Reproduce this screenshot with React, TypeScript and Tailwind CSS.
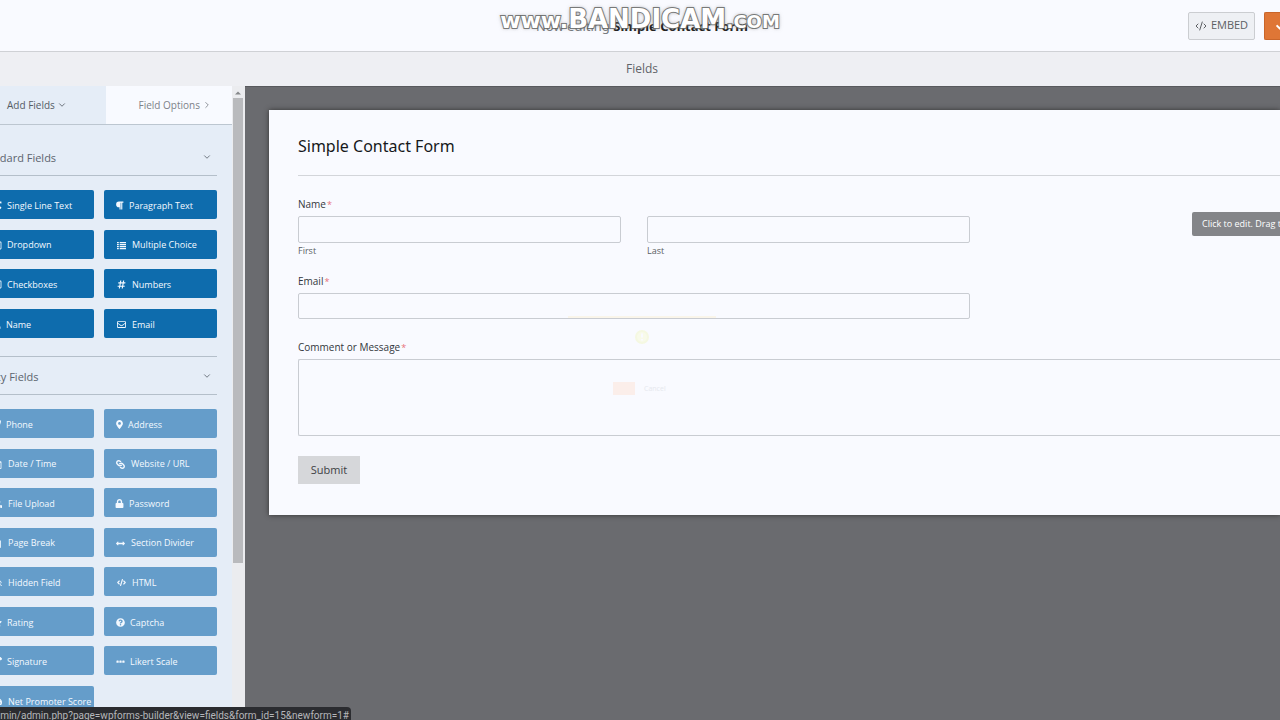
import type { ComponentType } from 'react'
import {
  FaArrowsAltH,
  FaCheck,
  FaHashtag,
  FaLink,
  FaLock,
  FaMapMarkerAlt,
  FaParagraph,
  FaPencilAlt,
  FaPhone,
  FaQuestionCircle,
  FaRegCalendar,
  FaRegCaretSquareDown,
  FaRegCheckSquare,
  FaRegEnvelope,
  FaRegEyeSlash,
  FaRegFile,
  FaStar,
  FaTachometerAlt,
  FaTextWidth,
  FaUpload,
  FaUser,
} from 'react-icons/fa'
import { ChevronDown, ChevronRight, CodeXml } from 'lucide-react'

type IconProps = { className?: string }

type Field = {
  label: string
  icon: ComponentType<IconProps>
  width: string
}

function ListIcon({ className }: IconProps) {
  return (
    <svg viewBox="0 0 20 20" fill="currentColor" className={className}>
      <path d="M0 2h4v3H0zM6 2h14v3H6zM0 6.5h4v3H0zM6 6.5h14v3H6zM0 11h4v3H0zM6 11h14v3H6zM0 15.5h4v3H0zM6 15.5h14v3H6z" />
    </svg>
  )
}

function DotsIcon({ className }: IconProps) {
  return (
    <svg viewBox="0 0 20 20" fill="currentColor" className={className}>
      <rect x="1" y="8" width="5" height="5" rx="1" />
      <rect x="7.5" y="8" width="5" height="5" rx="1" />
      <rect x="14" y="8" width="5" height="5" rx="1" />
    </svg>
  )
}

function ChainIcon({ className }: IconProps) {
  return <FaLink className={`rotate-90 ${className}`} />
}

function TagIcon({ className }: IconProps) {
  return <CodeXml className={className} strokeWidth={3} />
}

const STANDARD_FIELDS: Field[] = [
  { label: 'Single Line Text', icon: FaTextWidth, width: 'w-[8px]' },
  { label: 'Paragraph Text', icon: FaParagraph, width: 'w-[7px]' },
  { label: 'Dropdown', icon: FaRegCaretSquareDown, width: 'w-[8px]' },
  { label: 'Multiple Choice', icon: ListIcon, width: 'w-[10px]' },
  { label: 'Checkboxes', icon: FaRegCheckSquare, width: 'w-[8px]' },
  { label: 'Numbers', icon: FaHashtag, width: 'w-[10px]' },
  { label: 'Name', icon: FaUser, width: 'w-[7px]' },
  { label: 'Email', icon: FaRegEnvelope, width: 'w-[10px]' },
]

const FANCY_FIELDS: Field[] = [
  { label: 'Phone', icon: FaPhone, width: 'w-[7px]' },
  { label: 'Address', icon: FaMapMarkerAlt, width: 'w-[6px]' },
  { label: 'Date / Time', icon: FaRegCalendar, width: 'w-[9px]' },
  { label: 'Website / URL', icon: ChainIcon, width: 'w-[9px]' },
  { label: 'File Upload', icon: FaUpload, width: 'w-[9px]' },
  { label: 'Password', icon: FaLock, width: 'w-[7px]' },
  { label: 'Page Break', icon: FaRegFile, width: 'w-[9px]' },
  { label: 'Section Divider', icon: FaArrowsAltH, width: 'w-[9px]' },
  { label: 'Hidden Field', icon: FaRegEyeSlash, width: 'w-[9px]' },
  { label: 'HTML', icon: TagIcon, width: 'w-[10px]' },
  { label: 'Rating', icon: FaStar, width: 'w-[8px]' },
  { label: 'Captcha', icon: FaQuestionCircle, width: 'w-[8px]' },
  { label: 'Signature', icon: FaPencilAlt, width: 'w-[8px]' },
  { label: 'Likert Scale', icon: DotsIcon, width: 'w-[8px]' },
  { label: 'Net Promoter Score', icon: FaTachometerAlt, width: 'w-[9px]' },
]

function FieldButton({ field, color }: { field: Field; color: string }) {
  const Icon = field.icon
  return (
    <button
      type="button"
      className={`flex h-[29px] items-center gap-1.5 rounded-xs pt-0.5 pl-3 text-[9px] font-medium whitespace-nowrap text-[#f4f9ff] ${color}`}
    >
      <span className={`flex shrink-0 justify-center ${field.width}`}>
        <Icon className="h-[9px] w-[9px] shrink-0" />
      </span>
      {field.label}
    </button>
  )
}

function GroupHeading({ title }: { title: string }) {
  return (
    <h2>
      <button type="button" className="flex h-[37px] w-full items-center justify-between pr-[5px] text-[11px] text-[#5c646e]">
        <span className="pt-1">{title}</span>
        <ChevronDown className="h-2.5 w-2.5" />
      </button>
    </h2>
  )
}

function Sidebar() {
  return (
    <aside className="flex w-[245px] shrink-0 bg-[#e5edf7]">
      <div className="flex min-w-0 flex-1 justify-end overflow-hidden">
        {/* Wider than the visible column, its left edge is scrolled out of view */}
        <div className="w-[270px] shrink-0">
          <div className="flex h-[39px] border-b border-[#bcc6d0] text-[10px]">
            <button type="button" className="flex w-[144px] items-center gap-0.5 pl-[45px] text-[#555d66]">
              Add Fields
              <ChevronDown className="h-2.5 w-2.5" />
            </button>
            <button type="button" className="flex flex-1 items-center justify-end gap-0.5 bg-[#f8faff] pr-5 text-[#7d8289]">
              Field Options
              <ChevronRight className="h-2.5 w-2.5" />
            </button>
          </div>

          <div className="px-[15px] pt-[13px]">
            <section>
              <div className="border-b border-[#b4bfca]">
                <GroupHeading title="Standard Fields" />
              </div>
              <div className="mt-[14px] grid h-[148px] grid-cols-[113px_113px] content-between justify-end gap-x-[10px]">
                {STANDARD_FIELDS.map(f => (
                  <FieldButton key={f.label} field={f} color="bg-[#0e6cad]" />
                ))}
              </div>
            </section>

            <section className="mt-[18px]">
              <div className="border-y border-[#b4bfca]">
                <GroupHeading title="Fancy Fields" />
              </div>
              <div className="mt-[14px] grid h-[306px] grid-cols-[113px_113px] content-between justify-end gap-x-[10px]">
                {FANCY_FIELDS.map(f => (
                  <FieldButton key={f.label} field={f} color="bg-[#659dca]" />
                ))}
              </div>
            </section>
          </div>
        </div>
      </div>

      {/* Scrollbar */}
      <div className="flex w-[13px] shrink-0 flex-col items-center bg-[#ebecef] pr-px">
        <svg viewBox="0 0 12 12" className="h-3 w-3">
          <path d="M3 8.5 6 5.5 9 8.5z" fill="#85878a" />
        </svg>
        <div className="h-[465px] w-[10px] bg-[#b9babd]" />
      </div>
    </aside>
  )
}

function RequiredMark() {
  return <span className="pl-px text-[9px] text-[#e8707a]">*</span>
}

const inputClass = 'block w-full rounded-xs border border-[#c9ccd2] bg-[#f9faff]'

function FormPreview() {
  return (
    <form
      className="relative h-[405px] overflow-hidden bg-[#f9faff] pl-[29px] shadow-[0_0_5px_#333]"
      onSubmit={e => e.preventDefault()}
    >
      <h1 className="flex h-[66px] items-center border-b border-[#d3d5da] pt-1.5 font-['Noto_Sans'] text-[16px] text-[#16181b]">
        Simple Contact Form
      </h1>

      <div className="flex flex-col text-[10px] text-[#33373c]">
        <fieldset className="mt-5 w-[672px]">
          <legend className="h-5 leading-4 font-medium">
            Name
            <RequiredMark />
          </legend>
          <div className="grid grid-cols-2 gap-[26px] text-[9px] leading-4 text-[#5a5e64]">
            <div>
              <input id="first" type="text" className={`${inputClass} h-[27px]`} />
              <label htmlFor="first">First</label>
            </div>
            <div>
              <input id="last" type="text" className={`${inputClass} h-[27px]`} />
              <label htmlFor="last">Last</label>
            </div>
          </div>
        </fieldset>

        <div className="mt-[14px] w-[672px]">
          <label htmlFor="email" className="block h-5 leading-4 font-medium">
            Email
            <RequiredMark />
          </label>
          <input id="email" type="email" className={`${inputClass} h-[26px]`} />
        </div>

        <div className="mt-5">
          <label htmlFor="message" className="block h-5 leading-4 font-medium">
            Comment or Message
            <RequiredMark />
          </label>
          <textarea id="message" className="block h-[77px] w-full resize-none rounded-l-xs border border-r-0 border-[#c9ccd2] bg-[#f9faff]" />
        </div>
      </div>

      <button type="submit" className="mt-5 h-[28px] w-[62px] bg-[#d6d7da] text-[11px] text-[#3e4145]">
        Submit
      </button>

      <div className="absolute top-[102px] right-0 h-6 w-[88px] overflow-hidden rounded-l-xs bg-[#848589] pl-2.5 text-[9px] leading-6 font-medium whitespace-nowrap text-white">
        Click to edit. Drag to reorder.
      </div>
    </form>
  )
}

// Last frame of the dialog as it fades away
function FadingDialog() {
  return (
    <div className="pointer-events-none absolute top-[316px] left-[568px] w-[148px]" aria-hidden="true">
      <div className="h-0.5 bg-[#faf5ea]" />
      <svg viewBox="0 0 14 14" className="mx-auto mt-3 h-[14px] w-[14px]">
        <circle cx="7" cy="7" r="6" fill="#f8faea" stroke="#f5f8e2" strokeWidth="2" />
        <path d="M7 3.5v4M7 9v1.5" stroke="#f9faff" strokeWidth="2" />
      </svg>
      <div className="mt-[38px] flex items-center gap-[9px] pl-[45px]">
        <div className="h-[13px] w-[22px] bg-[#fbeeea]" />
        <span className="text-[7px] leading-3 text-[#e6e8ee]">Cancel</span>
      </div>
    </div>
  )
}

function Watermark() {
  return (
    <p className="absolute inset-x-0 top-[3px] flex items-baseline justify-center font-['DejaVu_Sans'] leading-8 font-bold text-white [paint-order:stroke_fill] [-webkit-text-stroke:2px_#5a5c5ad0] [text-shadow:0_0_3px_#77777780,0_0_4px_#88888880]">
      <span className="text-[22px]">www.</span>
      <span className="text-[26px]">BANDICAM</span>
      <span className="text-[19px]">.</span>
      <span className="text-[18px] uppercase">com</span>
    </p>
  )
}

export default function App() {
  return (
    <div className="relative flex h-screen flex-col overflow-hidden bg-[#6a6b6f] font-['Open_Sans','Noto_Sans',sans-serif]">
      <header className="grid h-[52px] shrink-0 grid-cols-[1fr_auto_1fr] items-center border-b border-[#cfd1d5] bg-[#f9faff]">
        <p className="col-start-2 pt-0.5 pl-1 font-['Noto_Sans'] text-[13px] text-[#777b80]">
          Now editing <strong className="font-bold text-[#222]">Simple Contact Form</strong>
        </p>
        <div className="flex justify-end gap-[9px]">
          <button
            type="button"
            className="flex h-[28px] w-[67px] items-center justify-center gap-1 rounded-xs border border-[#cbcdd1] bg-[#eef0f4] text-[11px] font-medium text-[#5c5f63]"
          >
            <CodeXml className="h-3 w-3" />
            EMBED
          </button>
          <button
            type="button"
            aria-label="Save"
            className="flex h-[28px] w-4 items-center overflow-hidden rounded-l-xs border border-r-0 border-[#c9652a] bg-[#df7636] pl-[11px] text-white"
          >
            <FaCheck className="h-2.5 w-2.5 shrink-0" />
          </button>
        </div>
      </header>
      <div className="flex h-[34px] shrink-0 items-center justify-center bg-[#eeeff3] pl-1 text-[12px] text-[#5f6368]">
        Fields
      </div>

      <div className="flex min-h-0 flex-1">
        <Sidebar />
        <main className="min-w-0 flex-1 border-t border-[#58595d] pt-[23px] pl-6">
          <FormPreview />
        </main>
      </div>

      <FadingDialog />
      <Watermark />

      <div className="absolute bottom-0 left-0 flex h-[13px] w-[351px] items-center justify-end overflow-hidden rounded-tr-sm bg-[#2b2c30] pt-1 pr-0.5 font-['Roboto'] text-[10px] whitespace-nowrap text-[#b5b7ba]">
        /wp-admin/admin.php?page=wpforms-builder&amp;view=fields&amp;form_id=15&amp;newform=1#
      </div>
    </div>
  )
}
